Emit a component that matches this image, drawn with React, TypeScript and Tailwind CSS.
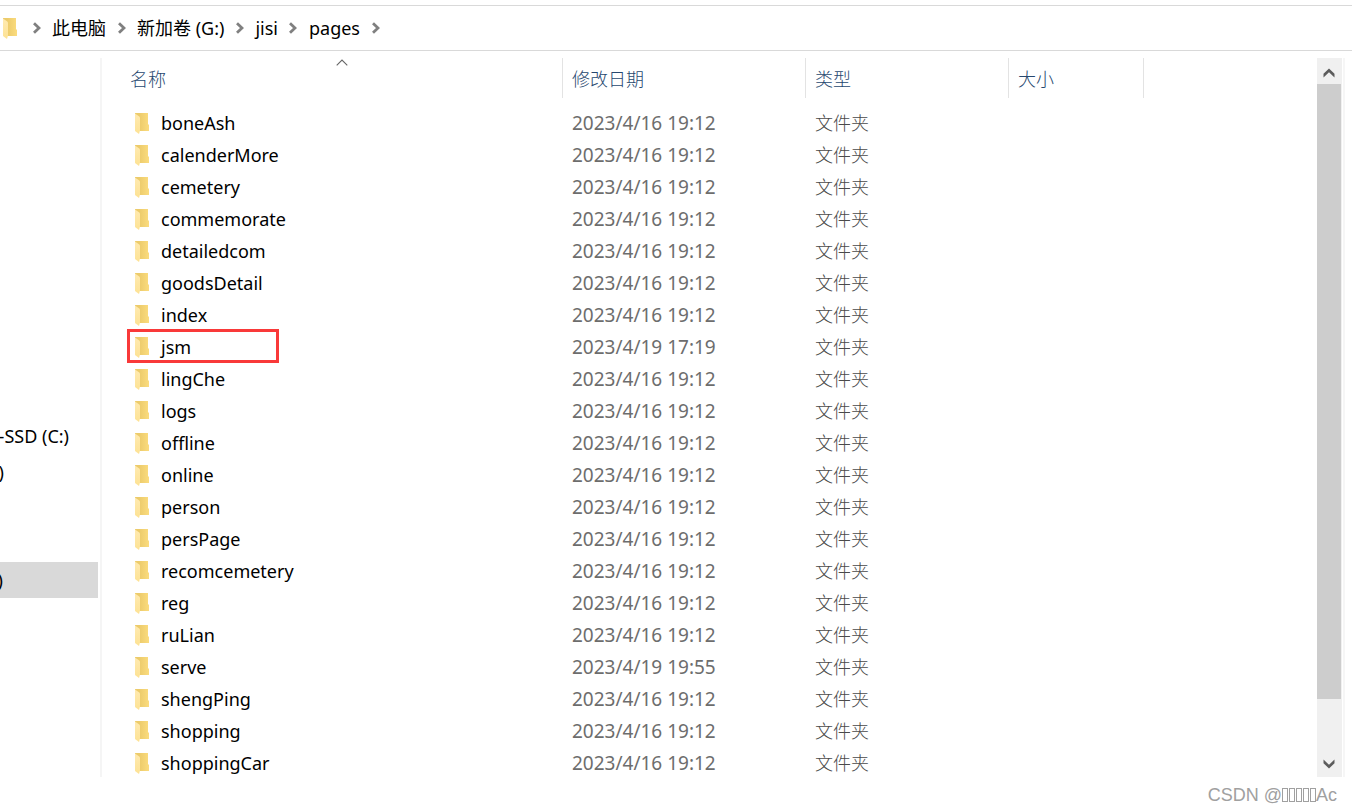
import { Fragment } from "react";

type Entry = { name: string; modified: string };

const OLD = "2023/4/16 19:12";

const entries: Entry[] = [
  { name: "boneAsh", modified: OLD },
  { name: "calenderMore", modified: OLD },
  { name: "cemetery", modified: OLD },
  { name: "commemorate", modified: OLD },
  { name: "detailedcom", modified: OLD },
  { name: "goodsDetail", modified: OLD },
  { name: "index", modified: OLD },
  { name: "jsm", modified: "2023/4/19 17:19" },
  { name: "lingChe", modified: OLD },
  { name: "logs", modified: OLD },
  { name: "offline", modified: OLD },
  { name: "online", modified: OLD },
  { name: "person", modified: OLD },
  { name: "persPage", modified: OLD },
  { name: "recomcemetery", modified: OLD },
  { name: "reg", modified: OLD },
  { name: "ruLian", modified: OLD },
  { name: "serve", modified: "2023/4/19 19:55" },
  { name: "shengPing", modified: OLD },
  { name: "shopping", modified: OLD },
  { name: "shoppingCar", modified: OLD },
];

const crumbs = ["此电脑", "新加卷 (G:)", "jisi", "pages"];

function FolderIcon() {
  return (
    <svg className="h-[21px] w-3.5 shrink-0" viewBox="0 0 14 21" aria-hidden="true">
      <defs>
        <linearGradient id="back" x1="0" x2="1">
          <stop offset="0.3" stopColor="#eccb6b" />
          <stop offset="1" stopColor="#fbdc7e" />
        </linearGradient>
        <linearGradient id="flap" x1="0" x2="0" y1="0" y2="1">
          <stop offset="0" stopColor="#ffeab0" />
          <stop offset="1" stopColor="#fde294" />
        </linearGradient>
      </defs>
      <path d="M0 0H13V11L14 12V18H4L0 1Z" fill="url(#back)" />
      <path d="M0 0.5L4.3 3.5Q5 4 5 5V17.5L4 21L0 18Z" fill="url(#flap)" />
    </svg>
  );
}

function CrumbArrow() {
  return (
    <svg className="h-3 w-2 shrink-0" viewBox="0 0 8 12" fill="none" stroke="#808080" strokeWidth="2.8" aria-hidden="true">
      <path d="M1 1.2L6 6L1 10.8" />
    </svg>
  );
}

function ScrollArrow({ down = false }: { down?: boolean }) {
  return (
    <svg className="h-2.5 w-3" viewBox="0 0 12 10" aria-hidden="true">
      <path d={down ? "M0.5 0.6V4.2L6 9.5L11.5 4.2V0.6L6 5.8Z" : "M0.5 9.4V5.8L6 0.5L11.5 5.8V9.4L6 4.2Z"} fill="#5c5c5c" />
    </svg>
  );
}

function PathBar() {
  return (
    <nav aria-label="路径" className="mt-[5px] flex h-[46px] items-center border-y border-[#d9d9d9] pl-[3px]">
      <FolderIcon />
      <span className="flex w-[35px] justify-center pl-1"><CrumbArrow /></span>
      {crumbs.map((c) => (
        <Fragment key={c}>
          <a href="#" className="whitespace-nowrap text-black">{c}</a>
          <span className="flex w-[31px] justify-center"><CrumbArrow /></span>
        </Fragment>
      ))}
    </nav>
  );
}

function Sidebar() {
  return (
    <aside className="w-[102px] shrink-0 border-r-2 border-[#f5f5f5] pt-[360px]">
      <a href="#" className="flex h-9 w-[69px] items-center justify-end overflow-hidden whitespace-nowrap">-SSD (C:)</a>
      <a href="#" className="flex h-9 items-center"><span className="flex w-1 justify-end overflow-hidden">)</span></a>
      <div className="h-[72px]" />
      <a href="#" aria-current="true" className="mr-0.5 flex h-9 items-center bg-[#d9d9d9]"><span className="flex w-[3px] justify-end overflow-hidden">)</span></a>
    </aside>
  );
}

function FileTable() {
  const head = "h-10 border-r border-[#e3e3e3] pt-0.5 pl-[9px] text-left font-light text-[#27486f]";
  return (
    <table className="w-full table-fixed border-separate border-spacing-0">
      <colgroup>
        <col className="w-[461px]" />
        <col className="w-[243px]" />
        <col className="w-[203px]" />
        <col className="w-[135px]" />
        <col />
      </colgroup>
      <thead>
        <tr>
          <th className="relative h-10 border-r border-[#e3e3e3] pt-0.5 pl-7 text-left font-light text-[#27486f]">
            名称
            <svg className="absolute top-px left-[234px] h-2 w-3" viewBox="0 0 12 8" fill="none" stroke="#666" strokeWidth="1.1" aria-hidden="true">
              <path d="M0.7 6.3L6 1L11.3 6.3" />
            </svg>
          </th>
          <th className={head}>修改日期</th>
          <th className={head}>类型</th>
          <th className={head}>大小</th>
          <td />
        </tr>
        <tr aria-hidden="true"><td className="h-[9px]" /></tr>
      </thead>
      <tbody>
        {entries.map((e) => (
          <tr key={e.name} className="h-8">
            <td className="relative h-8 p-0 pl-[33px]">
              <div className="flex items-center gap-3 text-black">
                <FolderIcon />
                {e.name}
              </div>
              {e.name === "jsm" && <div className="absolute -top-0.5 left-[25px] h-[34px] w-[152px] border-3 border-[#f93939]" />}
            </td>
            <td className="p-0 pl-[9px] text-[19px] text-[#6d6d6d]">{e.modified}</td>
            <td className="p-0 pl-[9px] font-light text-[#4a4a4a]">文件夹</td>
            <td />
            <td />
          </tr>
        ))}
      </tbody>
    </table>
  );
}

function ScrollBar() {
  return (
    <div className="mr-[7px] flex shrink-0 border-r-2 border-[#f6f6f6] pr-px">
      <div className="flex w-[25px] flex-col bg-[#f0f0f0]">
        <button aria-label="向上" className="mr-px flex h-[26px] items-center justify-center pt-1"><ScrollArrow /></button>
        <div className="mr-px h-[615px] bg-[#cdcdcd]" />
        <button aria-label="向下" className="mt-auto mr-px flex h-[26px] items-center justify-center"><ScrollArrow down /></button>
      </div>
    </div>
  );
}

function Watermark() {
  return (
    <footer className="flex items-center justify-end pt-1.5 pr-[15px] font-['Liberation_Sans',sans-serif] text-[#a0a0a0]">
      <span className="whitespace-pre">CSDN @</span>
      <span className="flex gap-px" aria-hidden="true">
        {[0, 1, 2, 3, 4].map((n) => (
          <span key={n} className="h-3.5 w-1.5 border border-[#a0a0a0]" />
        ))}
      </span>
      <span>Ac</span>
    </footer>
  );
}

export default function App() {
  return (
    <div className="flex min-h-screen flex-col bg-white font-['Noto_Sans','Noto_Sans_CJK_SC',sans-serif] text-lg/6">
      <PathBar />
      <main className="mt-[7px] flex h-[719px] overflow-hidden">
        <Sidebar />
        <div className="min-w-0 grow"><FileTable /></div>
        <ScrollBar />
      </main>
      <Watermark />
    </div>
  );
}
